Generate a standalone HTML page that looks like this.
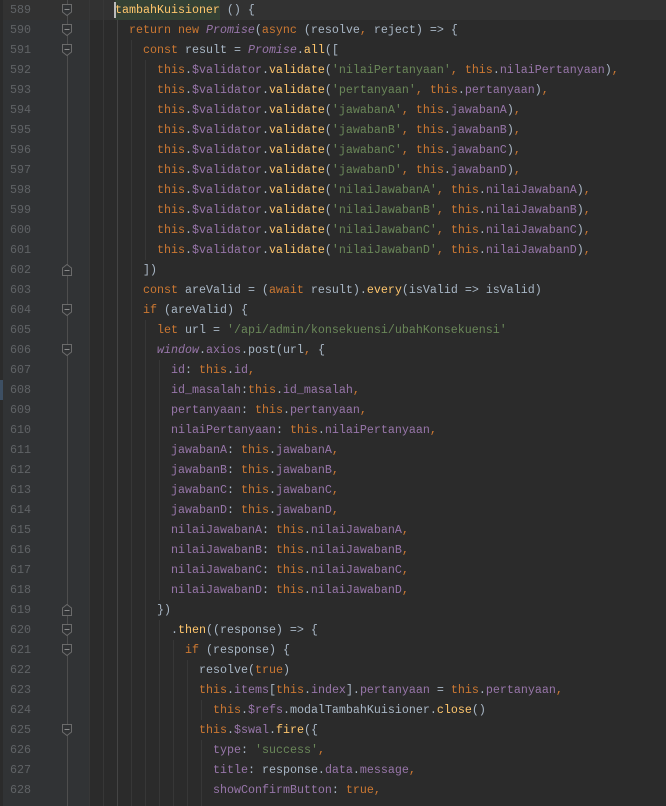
<!DOCTYPE html>
<html><head><meta charset="utf-8"><style>
html,body{margin:0;padding:0;}
body{width:666px;height:806px;overflow:hidden;background:#2B2B2B;position:relative;font-family:"Liberation Mono",monospace;font-size:11.67px;}
#gut{position:absolute;left:3px;top:0;width:86px;height:806px;background:#313335;}
.ln{position:absolute;left:0;width:31px;text-align:right;color:#606366;height:20px;line-height:20px;}
.cl{position:absolute;height:20px;line-height:20px;white-space:pre;color:#A9B7C6;}
.g{position:absolute;width:1px;background:#373737;}
.k{color:#CC7832}.s{color:#6A8759}.p{color:#9876AA}.f{color:#FFC66D}.i{color:#9876AA;font-style:italic}
svg.fd{position:absolute;left:61px;width:12px;height:12px;}
</style></head><body>
<div id="gut"></div>
<div style="position:absolute;left:3px;top:0;width:663px;height:20px;background:#323232"></div>
<div style="position:absolute;left:0;top:380px;width:3px;height:20px;background:#3d4f63"></div>
<div class="g" style="left:67px;top:0;height:806px;background:#4e4e4e"></div>
<div class="g" style="left:89px;top:0;height:806px"></div>
<div class="g" style="left:103px;top:0;height:806px"></div>
<div class="g" style="left:117px;top:20px;height:786px;background:#444"></div>
<div class="g" style="left:131px;top:40px;height:766px"></div>
<div class="g" style="left:145px;top:60px;height:200px"></div>
<div class="g" style="left:145px;top:320px;height:486px"></div>
<div class="g" style="left:159px;top:360px;height:240px"></div>
<div class="g" style="left:159px;top:620px;height:186px"></div>
<div class="g" style="left:173px;top:640px;height:166px"></div>
<div class="g" style="left:187px;top:660px;height:146px"></div>
<div class="g" style="left:201px;top:700px;height:20px"></div>
<div class="g" style="left:201px;top:740px;height:66px"></div>

<svg class="fd" style="top:4px" viewBox="0 0 12 12"><path d="M1.5 0.5H10.5V8L6 11.5L1.5 8Z" fill="#313335" stroke="#6b6b6b"/><path d="M3.5 5.5H8.5" stroke="#8a8a8a"/></svg>
<svg class="fd" style="top:24px" viewBox="0 0 12 12"><path d="M1.5 0.5H10.5V8L6 11.5L1.5 8Z" fill="#313335" stroke="#6b6b6b"/><path d="M3.5 5.5H8.5" stroke="#8a8a8a"/></svg>
<svg class="fd" style="top:44px" viewBox="0 0 12 12"><path d="M1.5 0.5H10.5V8L6 11.5L1.5 8Z" fill="#313335" stroke="#6b6b6b"/><path d="M3.5 5.5H8.5" stroke="#8a8a8a"/></svg>
<svg class="fd" style="top:264px" viewBox="0 0 12 12"><path d="M1.5 11.5H10.5V4L6 0.5L1.5 4Z" fill="#313335" stroke="#6b6b6b"/><path d="M3.5 6.5H8.5" stroke="#8a8a8a"/></svg>
<svg class="fd" style="top:304px" viewBox="0 0 12 12"><path d="M1.5 0.5H10.5V8L6 11.5L1.5 8Z" fill="#313335" stroke="#6b6b6b"/><path d="M3.5 5.5H8.5" stroke="#8a8a8a"/></svg>
<svg class="fd" style="top:344px" viewBox="0 0 12 12"><path d="M1.5 0.5H10.5V8L6 11.5L1.5 8Z" fill="#313335" stroke="#6b6b6b"/><path d="M3.5 5.5H8.5" stroke="#8a8a8a"/></svg>
<svg class="fd" style="top:604px" viewBox="0 0 12 12"><path d="M1.5 11.5H10.5V4L6 0.5L1.5 4Z" fill="#313335" stroke="#6b6b6b"/><path d="M3.5 6.5H8.5" stroke="#8a8a8a"/></svg>
<svg class="fd" style="top:624px" viewBox="0 0 12 12"><path d="M1.5 0.5H10.5V8L6 11.5L1.5 8Z" fill="#313335" stroke="#6b6b6b"/><path d="M3.5 5.5H8.5" stroke="#8a8a8a"/></svg>
<svg class="fd" style="top:644px" viewBox="0 0 12 12"><path d="M1.5 0.5H10.5V8L6 11.5L1.5 8Z" fill="#313335" stroke="#6b6b6b"/><path d="M3.5 5.5H8.5" stroke="#8a8a8a"/></svg>
<svg class="fd" style="top:724px" viewBox="0 0 12 12"><path d="M1.5 0.5H10.5V8L6 11.5L1.5 8Z" fill="#313335" stroke="#6b6b6b"/><path d="M3.5 5.5H8.5" stroke="#8a8a8a"/></svg>

<div style="position:absolute;left:115px;top:0;width:105px;height:20px;background:#344134"></div>
<div style="position:absolute;left:114px;top:2px;width:2px;height:16px;background:#bbb"></div>

<div class="ln" style="top:0">589</div><div class="cl" style="top:0;left:115px"><span class="f">tambahKuisioner</span> () {</div>
<div class="ln" style="top:20px">590</div><div class="cl" style="top:20px;left:129px"><span class="k">return new </span><span class="i">Promise</span>(<span class="k">async</span> (resolve<span class="k">, </span>reject) => {</div>
<div class="ln" style="top:40px">591</div><div class="cl" style="top:40px;left:143px"><span class="k">const </span>result = <span class="i">Promise</span>.<span class="f">all</span>([</div>
<div class="ln" style="top:60px">592</div><div class="cl" style="top:60px;left:157px"><span class="k">this</span>.<span class="p">$validator</span>.<span class="f">validate</span>(<span class="s">'nilaiPertanyaan'</span><span class="k">, this</span>.<span class="p">nilaiPertanyaan</span>)<span class="k">,</span></div>
<div class="ln" style="top:80px">593</div><div class="cl" style="top:80px;left:157px"><span class="k">this</span>.<span class="p">$validator</span>.<span class="f">validate</span>(<span class="s">'pertanyaan'</span><span class="k">, this</span>.<span class="p">pertanyaan</span>)<span class="k">,</span></div>
<div class="ln" style="top:100px">594</div><div class="cl" style="top:100px;left:157px"><span class="k">this</span>.<span class="p">$validator</span>.<span class="f">validate</span>(<span class="s">'jawabanA'</span><span class="k">, this</span>.<span class="p">jawabanA</span>)<span class="k">,</span></div>
<div class="ln" style="top:120px">595</div><div class="cl" style="top:120px;left:157px"><span class="k">this</span>.<span class="p">$validator</span>.<span class="f">validate</span>(<span class="s">'jawabanB'</span><span class="k">, this</span>.<span class="p">jawabanB</span>)<span class="k">,</span></div>
<div class="ln" style="top:140px">596</div><div class="cl" style="top:140px;left:157px"><span class="k">this</span>.<span class="p">$validator</span>.<span class="f">validate</span>(<span class="s">'jawabanC'</span><span class="k">, this</span>.<span class="p">jawabanC</span>)<span class="k">,</span></div>
<div class="ln" style="top:160px">597</div><div class="cl" style="top:160px;left:157px"><span class="k">this</span>.<span class="p">$validator</span>.<span class="f">validate</span>(<span class="s">'jawabanD'</span><span class="k">, this</span>.<span class="p">jawabanD</span>)<span class="k">,</span></div>
<div class="ln" style="top:180px">598</div><div class="cl" style="top:180px;left:157px"><span class="k">this</span>.<span class="p">$validator</span>.<span class="f">validate</span>(<span class="s">'nilaiJawabanA'</span><span class="k">, this</span>.<span class="p">nilaiJawabanA</span>)<span class="k">,</span></div>
<div class="ln" style="top:200px">599</div><div class="cl" style="top:200px;left:157px"><span class="k">this</span>.<span class="p">$validator</span>.<span class="f">validate</span>(<span class="s">'nilaiJawabanB'</span><span class="k">, this</span>.<span class="p">nilaiJawabanB</span>)<span class="k">,</span></div>
<div class="ln" style="top:220px">600</div><div class="cl" style="top:220px;left:157px"><span class="k">this</span>.<span class="p">$validator</span>.<span class="f">validate</span>(<span class="s">'nilaiJawabanC'</span><span class="k">, this</span>.<span class="p">nilaiJawabanC</span>)<span class="k">,</span></div>
<div class="ln" style="top:240px">601</div><div class="cl" style="top:240px;left:157px"><span class="k">this</span>.<span class="p">$validator</span>.<span class="f">validate</span>(<span class="s">'nilaiJawabanD'</span><span class="k">, this</span>.<span class="p">nilaiJawabanD</span>)<span class="k">,</span></div>
<div class="ln" style="top:260px">602</div><div class="cl" style="top:260px;left:143px">])</div>
<div class="ln" style="top:280px">603</div><div class="cl" style="top:280px;left:143px"><span class="k">const </span>areValid = (<span class="k">await </span>result).<span class="f">every</span>(isValid => isValid)</div>
<div class="ln" style="top:300px">604</div><div class="cl" style="top:300px;left:143px"><span class="k">if </span>(areValid) {</div>
<div class="ln" style="top:320px">605</div><div class="cl" style="top:320px;left:157px"><span class="k">let </span>url = <span class="s">'/api/admin/konsekuensi/ubahKonsekuensi'</span></div>
<div class="ln" style="top:340px">606</div><div class="cl" style="top:340px;left:157px"><span class="i">window</span>.<span class="p">axios</span>.post(url<span class="k">, </span>{</div>
<div class="ln" style="top:360px">607</div><div class="cl" style="top:360px;left:171px"><span class="p">id</span>: <span class="k">this</span>.<span class="p">id</span><span class="k">,</span></div>
<div class="ln" style="top:380px">608</div><div class="cl" style="top:380px;left:171px"><span class="p">id_masalah</span>:<span class="k">this</span>.<span class="p">id_masalah</span><span class="k">,</span></div>
<div class="ln" style="top:400px">609</div><div class="cl" style="top:400px;left:171px"><span class="p">pertanyaan</span>: <span class="k">this</span>.<span class="p">pertanyaan</span><span class="k">,</span></div>
<div class="ln" style="top:420px">610</div><div class="cl" style="top:420px;left:171px"><span class="p">nilaiPertanyaan</span>: <span class="k">this</span>.<span class="p">nilaiPertanyaan</span><span class="k">,</span></div>
<div class="ln" style="top:440px">611</div><div class="cl" style="top:440px;left:171px"><span class="p">jawabanA</span>: <span class="k">this</span>.<span class="p">jawabanA</span><span class="k">,</span></div>
<div class="ln" style="top:460px">612</div><div class="cl" style="top:460px;left:171px"><span class="p">jawabanB</span>: <span class="k">this</span>.<span class="p">jawabanB</span><span class="k">,</span></div>
<div class="ln" style="top:480px">613</div><div class="cl" style="top:480px;left:171px"><span class="p">jawabanC</span>: <span class="k">this</span>.<span class="p">jawabanC</span><span class="k">,</span></div>
<div class="ln" style="top:500px">614</div><div class="cl" style="top:500px;left:171px"><span class="p">jawabanD</span>: <span class="k">this</span>.<span class="p">jawabanD</span><span class="k">,</span></div>
<div class="ln" style="top:520px">615</div><div class="cl" style="top:520px;left:171px"><span class="p">nilaiJawabanA</span>: <span class="k">this</span>.<span class="p">nilaiJawabanA</span><span class="k">,</span></div>
<div class="ln" style="top:540px">616</div><div class="cl" style="top:540px;left:171px"><span class="p">nilaiJawabanB</span>: <span class="k">this</span>.<span class="p">nilaiJawabanB</span><span class="k">,</span></div>
<div class="ln" style="top:560px">617</div><div class="cl" style="top:560px;left:171px"><span class="p">nilaiJawabanC</span>: <span class="k">this</span>.<span class="p">nilaiJawabanC</span><span class="k">,</span></div>
<div class="ln" style="top:580px">618</div><div class="cl" style="top:580px;left:171px"><span class="p">nilaiJawabanD</span>: <span class="k">this</span>.<span class="p">nilaiJawabanD</span><span class="k">,</span></div>
<div class="ln" style="top:600px">619</div><div class="cl" style="top:600px;left:157px">})</div>
<div class="ln" style="top:620px">620</div><div class="cl" style="top:620px;left:171px">.<span class="f">then</span>((response) => {</div>
<div class="ln" style="top:640px">621</div><div class="cl" style="top:640px;left:185px"><span class="k">if </span>(response) {</div>
<div class="ln" style="top:660px">622</div><div class="cl" style="top:660px;left:199px">resolve(<span class="k">true</span>)</div>
<div class="ln" style="top:680px">623</div><div class="cl" style="top:680px;left:199px"><span class="k">this</span>.<span class="p">items</span>[<span class="k">this</span>.<span class="p">index</span>].<span class="p">pertanyaan</span> = <span class="k">this</span>.<span class="p">pertanyaan</span><span class="k">,</span></div>
<div class="ln" style="top:700px">624</div><div class="cl" style="top:700px;left:213px"><span class="k">this</span>.<span class="p">$refs</span>.modalTambahKuisioner.<span class="f">close</span>()</div>
<div class="ln" style="top:720px">625</div><div class="cl" style="top:720px;left:199px"><span class="k">this</span>.<span class="p">$swal</span>.<span class="f">fire</span>({</div>
<div class="ln" style="top:740px">626</div><div class="cl" style="top:740px;left:213px"><span class="p">type</span>: <span class="s">'success'</span><span class="k">,</span></div>
<div class="ln" style="top:760px">627</div><div class="cl" style="top:760px;left:213px"><span class="p">title</span>: response.<span class="p">data</span>.<span class="p">message</span><span class="k">,</span></div>
<div class="ln" style="top:780px">628</div><div class="cl" style="top:780px;left:213px"><span class="p">showConfirmButton</span>: <span class="k">true,</span></div>
</body></html>
